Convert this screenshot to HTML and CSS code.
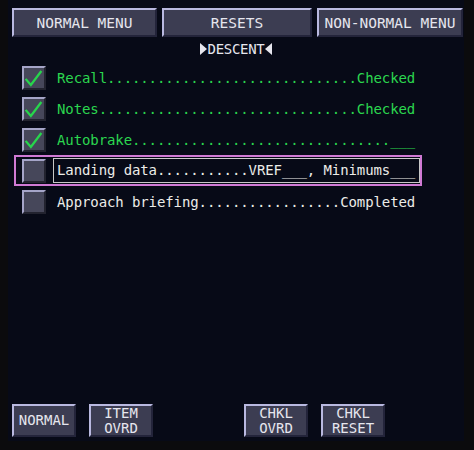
FILE: index.html
```html
<!DOCTYPE html>
<html>
<head>
  <title>Checklist - Descent</title>
  <link rel="stylesheet" href="styles.css">
</head>
<body>
  <div class="screen">
    <div class="topbar">
      <button class="key menu-normal">NORMAL MENU</button>
      <button class="key menu-resets">RESETS</button>
      <button class="key menu-nonnormal">NON-NORMAL MENU</button>
    </div>

    <div class="title"><span class="tri right"></span>DESCENT<span class="tri left"></span></div>

    <div class="list">
      <div class="item done">
        <span class="box"><svg viewBox="0 0 24 24"><path d="M3 13 L9 20 L21 4"/></svg></span>
        <span class="line">Recall..............................Checked</span>
      </div>
      <div class="item done">
        <span class="box"><svg viewBox="0 0 24 24"><path d="M3 13 L9 20 L21 4"/></svg></span>
        <span class="line">Notes...............................Checked</span>
      </div>
      <div class="item done">
        <span class="box"><svg viewBox="0 0 24 24"><path d="M3 13 L9 20 L21 4"/></svg></span>
        <span class="line">Autobrake...............................___</span>
      </div>
      <div class="item current">
        <span class="box"></span>
        <span class="line">Landing data...........VREF___, Minimums___</span>
      </div>
      <div class="item">
        <span class="box"></span>
        <span class="line">Approach briefing.................Completed</span>
      </div>
    </div>

    <div class="bottombar">
      <button class="key small">NORMAL</button>
      <button class="key small">ITEM<br>OVRD</button>
      <span class="spacer"></span>
      <button class="key small">CHKL<br>OVRD</button>
      <button class="key small">CHKL<br>RESET</button>
    </div>
  </div>
</body>
</html>
```

FILE: styles.css
```css
body {
  margin: 0;
  background: #0b0b0d;
  font-family: "DejaVu Sans Mono", "Liberation Mono", monospace;
}

.screen {
  width: 456px;
  height: 441px;
  margin-left: 8px;
  background: #070a17;
  display: flex;
  flex-direction: column;
}

.key {
  font-family: "DejaVu Sans Mono", "Liberation Mono", monospace;
  font-size: 14px;
  color: #e6e6ee;
  background: #3c3d52;
  border: 2px solid;
  border-color: #b9b9e0 #23243a #23243a #b9b9e0;
  padding: 0;
  line-height: 14px;
}

.topbar {
  display: flex;
  gap: 5px;
  padding: 8px 0 0 4px;
}

.topbar .key {
  height: 29px;
  font-size: 14.5px;
}

.menu-normal { width: 145px; }
.menu-resets { width: 150px; }
.menu-nonnormal { width: 146px; }

.title {
  color: #e6e6ee;
  font-size: 14px;
  height: 22px;
  margin-top: 1px;
  letter-spacing: -0.3px;
  display: flex;
  align-items: center;
  justify-content: center;
  gap: 1px;
}

.tri {
  width: 0;
  height: 0;
  border-top: 6px solid transparent;
  border-bottom: 6px solid transparent;
}

.tri.right {
  border-left: 7px solid #e6e6ee;
}

.tri.left {
  border-right: 7px solid #e6e6ee;
}

.list {
  margin-top: 2px;
  padding-left: 6px;
}

.item {
  display: flex;
  align-items: center;
  height: 31px;
  width: 408px;
  box-sizing: border-box;
  padding-left: 8px;
}

.box {
  width: 24px;
  height: 24px;
  box-sizing: border-box;
  background: #46475a;
  border: 2px solid;
  border-color: #a5a5c8 #22232f #22232f #a5a5c8;
  display: flex;
}

.box svg {
  width: 26px;
  height: 26px;
  margin: -3px 0 0 -1px;
  fill: none;
  stroke: #27d64c;
  stroke-width: 2.6;
}

.line {
  font-size: 14px;
  color: #ecece8;
  margin-left: 11px;
  white-space: pre;
  letter-spacing: -0.1px;
}

.done .line {
  color: #2bd64f;
}

.current {
  border: 2px solid #d07ad4;
  padding-left: 6px;
}

.current .line {
  border: 1px solid #c8c8c8;
  height: 23px;
  line-height: 23px;
  padding-left: 3px;
  margin-left: 7px;
  width: 362px;
}

.bottombar {
  margin-top: auto;
  display: flex;
  gap: 13px;
  padding: 0 0 4px 4px;
}

.key.small {
  width: 64px;
  height: 33px;
  font-size: 14px;
  line-height: 15px;
}

.spacer {
  width: 65px;
}
```
